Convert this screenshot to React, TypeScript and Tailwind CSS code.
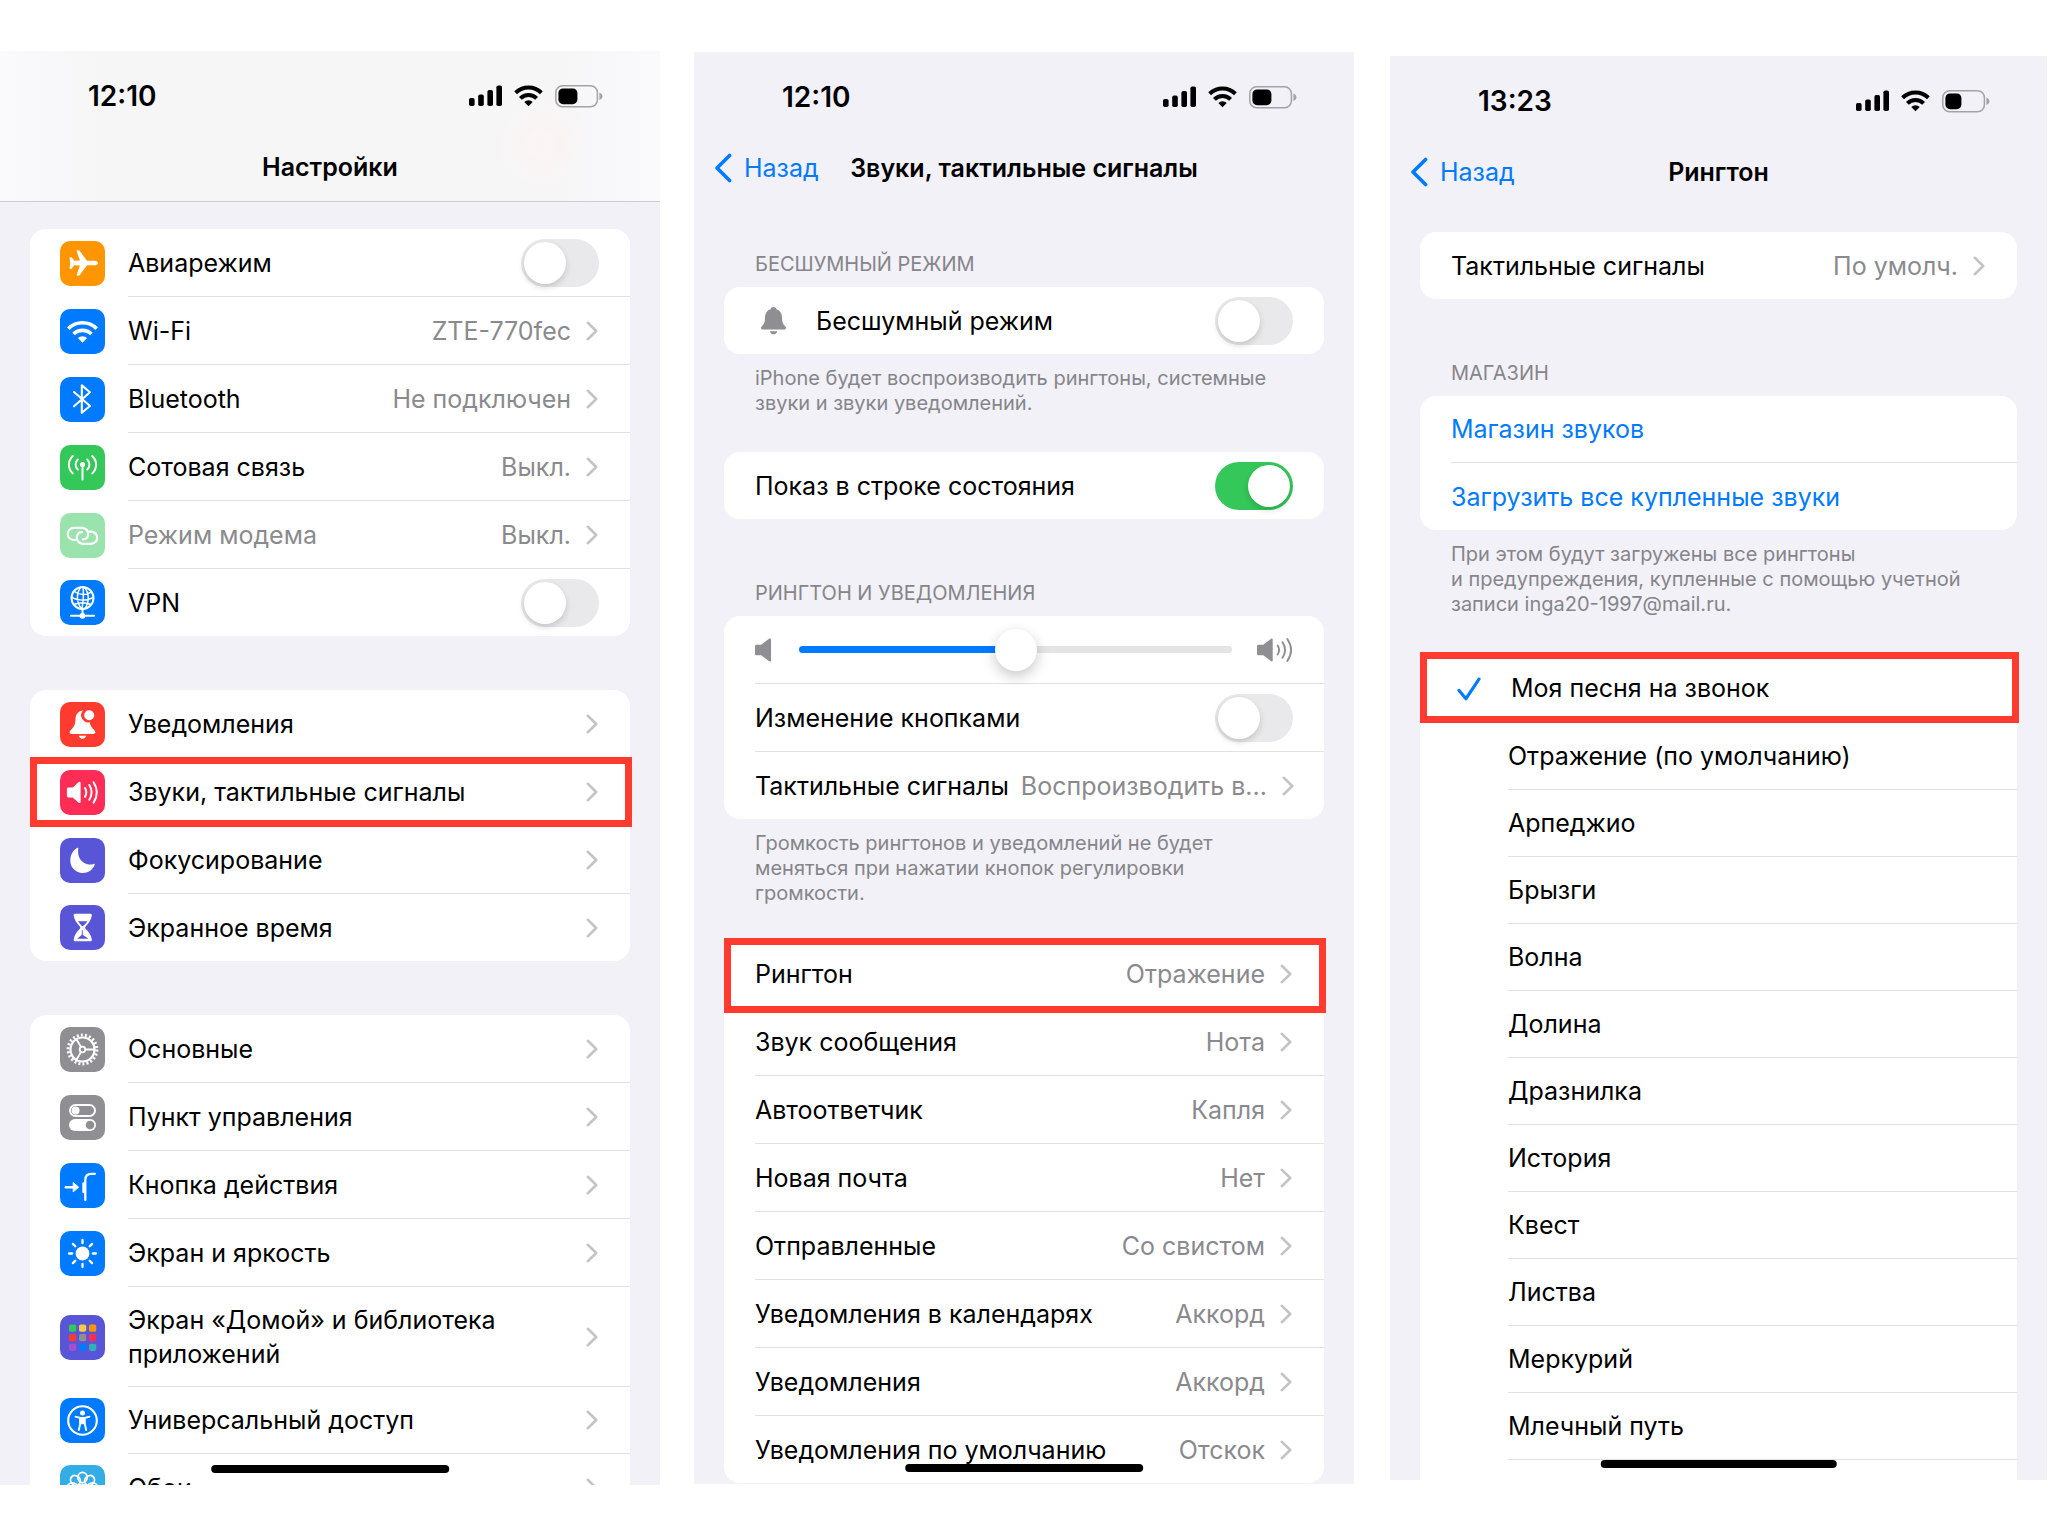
import type { ReactNode } from "react";
import clsx from "clsx";

/* ---------- status bar ---------- */

function StatusBar({ time, charge }: { time: string; charge: number }) {
  return (
    <div className="flex h-[90px] items-center justify-between pl-[88px] pr-[57px]">
      <span className="text-[28px] font-semibold leading-8">{time}</span>
      <div className="flex items-center gap-3">
        <svg width="33" height="22" viewBox="0 0 33 22" aria-hidden="true">
          <rect x="0" y="13" width="5.6" height="8" rx="1.8" />
          <rect x="9.2" y="9.5" width="5.6" height="11.5" rx="1.8" />
          <rect x="18.4" y="5" width="5.6" height="16" rx="1.8" />
          <rect x="27.4" y="0.5" width="5.6" height="20.5" rx="1.8" />
        </svg>
        <svg width="29" height="22" viewBox="0 0 29 22" fill="none" stroke="#000" strokeWidth="4" aria-hidden="true">
          <path d="M1.6 7.8a18.5 18.5 0 0 1 25.8 0" />
          <path d="M6.4 13.4a11.4 11.4 0 0 1 16.2 0" />
          <path d="M14.5 21.3l-4.2-4.3a6 6 0 0 1 8.4 0z" fill="#000" stroke="none" />
        </svg>
        <svg width="48" height="23" viewBox="0 0 48 23" aria-hidden="true">
          <rect x="0.8" y="0.8" width="41.6" height="21" rx="6.8" fill="none" stroke="#a3a3a7" strokeWidth="1.5" />
          <rect x="3.4" y="3.4" width={charge} height="15.8" rx="4.6" />
          <path d="M44.4 7.6c2 .8 3 2 3 3.7s-1 2.9-3 3.7z" fill="#a3a3a7" />
        </svg>
      </div>
    </div>
  );
}

function NavBar({ title, back }: { title: string; back?: boolean }) {
  return (
    <div className="grid h-[52px] grid-cols-[1fr_auto_1fr] items-center">
      <div>
        {back && (
          <a href="#back" className="ml-5 flex w-fit items-center gap-3 text-[25px] leading-8 text-[#007aff]">
            <svg width="18" height="30" viewBox="0 0 18 30" fill="none" stroke="currentColor" strokeWidth="3.6" strokeLinecap="round" strokeLinejoin="round" aria-hidden="true">
              <path d="M15.6 2.4L3 15l12.600 12.600" />
            </svg>
            Назад
          </a>
        )}
      </div>
      <h1 className="text-[25px] font-semibold leading-8">{title}</h1>
    </div>
  );
}

function HomeIndicator() {
  return <div className="absolute bottom-3 left-1/2 h-2 w-[36%] -translate-x-1/2 rounded-full bg-black" />;
}

/* ---------- list parts ---------- */

function Chevron() {
  return (
    <svg className="mr-px shrink-0" width="12" height="20" viewBox="0 0 12 20" fill="none" stroke="#c4c4c7" strokeWidth="2.6" strokeLinecap="round" strokeLinejoin="round" aria-hidden="true">
      <path d="M1.800 1.800L10.200 10l-8.400 8.200" />
    </svg>
  );
}

function Switch({ on }: { on?: boolean }) {
  return (
    <input
      type="checkbox"
      role="switch"
      defaultChecked={on}
      className="h-12 w-[78px] shrink-0 appearance-none rounded-full bg-[#e9e9eb] p-[3px] before:block before:size-[42px] before:rounded-full before:bg-white before:shadow-[0_3px_6px_rgba(0,0,0,0.16)] checked:bg-[#34c759] checked:before:ml-[30px]"
    />
  );
}

function Card({ children, className }: { children: ReactNode; className?: string }) {
  return <div className={clsx("mx-[30px] rounded-2xl bg-white", className)}>{children}</div>;
}

function Highlight({ className }: { className: string }) {
  return (
    <span
      className={clsx("pointer-events-none absolute left-0 -right-0.5 z-10 border-[7px] border-[#ff3b30]", className)}
    />
  );
}

type RowProps = {
  label: string;
  value?: string;
  icon?: ReactNode;
  toggle?: boolean;
  on?: boolean;
  dim?: boolean;
  highlight?: string;
  size?: "normal" | "compact" | "double";
};

function Row({ label, value, icon, toggle, on, dim, highlight, size = "normal" }: RowProps) {
  const rowClass = clsx(
    "group/row relative flex items-center",
    icon ? "pl-[30px]" : "pl-[31px]",
    size === "normal" && "h-[68px] last:h-[67px]",
    size === "compact" && "h-[67px]",
    size === "double" && "h-[100px]",
  );
  const body = (
    <>
      {icon}
      <span className="flex flex-1 items-center gap-3 self-stretch border-b border-[#e1e1e4] pr-[31px] group-last/row:border-b-0">
        <span className={clsx("flex-1 text-[25px] leading-[34px]", dim ? "text-[#8a8a8e]" : "text-black", value && "whitespace-nowrap")}>
          {label}
        </span>
        {toggle ? (
          <Switch on={on} />
        ) : (
          <span className="flex items-center gap-[15px]">
            {value && <span className="whitespace-nowrap text-[25px] leading-[34px] text-[#8a8a8e]">{value}</span>}
            <Chevron />
          </span>
        )}
      </span>
      {highlight && <Highlight className={highlight} />}
    </>
  );

  if (toggle) {
    return <label className={rowClass}>{body}</label>;
  }
  return (
    <a href="#row" className={rowClass}>
      {body}
    </a>
  );
}

function SectionTitle({ children, className }: { children: ReactNode; className?: string }) {
  return <h2 className={clsx("mx-[61px] mb-[11px] text-[20px] leading-6 text-[#85858a]", className)}>{children}</h2>;
}

function Note({ children }: { children: ReactNode }) {
  return <p className="mx-[61px] pt-3 text-[20px] leading-[25px] text-[#85858a]">{children}</p>;
}

/* ---------- settings icons, all on a 45px tile ---------- */

function Tile({ className, children }: { className: string; children: ReactNode }) {
  return (
    <svg
      className={clsx("mr-[23px] size-[45px] shrink-0 rounded-[10px]", className)}
      viewBox="0 0 45 45"
      fill="none"
      stroke="#fff"
      strokeWidth="2"
      strokeLinecap="round"
      strokeLinejoin="round"
      aria-hidden="true"
    >
      {children}
    </svg>
  );
}

const airplane = (
  <Tile className="bg-[#ff9500]">
    <path
      d="M38 22c0 1.400-1.900 2.300-4.200 2.300H27L19.800 34c-.4.500-.8.700-1.400.7h-1.100c-.5 0-.8-.4-.6-.9l3.200-9.400-5.600-.2-2.300 3c-.3.400-.6.500-1 .5h-.8c-.5 0-.8-.3-.7-.8l.8-4.900-.8-4.900c-.1-.5.2-.8.7-.8h.8c.4 0 .7.100 1 .5l2.300 3 5.600-.2-3.200-9.400c-.2-.5.100-.9.600-.9h1.100c.6 0 1 .2 1.400.7l7.200 9.700h6.800c2.300 0 4.200.9 4.200 2.300z"
      fill="#fff"
      stroke="none"
    />
  </Tile>
);

const wifi = (
  <Tile className="bg-[#007aff]">
    <g strokeWidth="3.700" strokeLinecap="butt">
      <path d="M8.300 19.600a20.100 20.100 0 0 1 28.400 0" />
      <path d="M13.600 25a12.600 12.600 0 0 1 17.800 0" />
    </g>
    <path d="M22.500 33.800l-4.600-4.700a6.500 6.500 0 0 1 9.200 0z" fill="#fff" stroke="none" />
  </Tile>
);

const bluetooth = (
  <Tile className="bg-[#007aff]">
    <path d="M14 15l16 14-8.200 6.800V8.400L30 15.200 14 29.200" strokeWidth="2.100" />
  </Tile>
);

const cellular = (
  <Tile className="bg-[#34c759]">
    <path d="M22.500 20v14.500" />
    <circle cx="22.500" cy="19.500" r="2.600" fill="#fff" stroke="none" />
    <path d="M17.800 14.500c-3 2.800-3 7.200 0 10M27.200 14.500c3 2.800 3 7.200 0 10M12.800 11c-5.200 5-5.200 12.500 0 17.400M32.200 11c5.200 5 5.200 12.500 0 17.400" />
  </Tile>
);

const hotspot = (
  <Tile className="bg-[#9ae3ac]">
    <path
      d="M15.500 27h-1.600a6.100 6.100 0 0 1 0-12.200h8.200a6.100 6.100 0 0 1 6 7.300c-.5 2.600-2.400 4.300-5.200 4.300M29.500 18.600h1.600a6.100 6.100 0 0 1 0 12.200h-8.200a6.100 6.100 0 0 1-6-7.300c.5-2.600 2.400-4.300 5.200-4.300"
      strokeWidth="2.200"
    />
  </Tile>
);

const vpn = (
  <Tile className="bg-[#007aff]">
    <g strokeWidth="1.500">
      <circle cx="22.500" cy="18" r="11" strokeWidth="1.900" />
      <path d="M20.500 7.500c-4.500 6-4 15.500 1 21M24.500 7.500c4.800 5.500 5 14.500.5 21M23 7.200c.8 7 .3 14.500-1 21.500M14.500 11.500c5 3.800 11.500 4 16.500.6M11.800 17.500c6.500 3.300 15 3.300 21.500 0M14 24.500c4.800-2.400 12-2.400 17 0" />
    </g>
    <path d="M22.500 29v5M11 35.800h23" strokeWidth="2.100" />
    <circle cx="22.500" cy="35.800" r="2.900" fill="#fff" stroke="none" />
  </Tile>
);

const notifications = (
  <Tile className="bg-[#ff3b30]">
    <path
      d="M23 8.400c-4.800.4-7.400 4-7.500 8.800-.2 5-1.200 7.300-4.200 10.200-1 1-1.700 1.900-1.700 2.900 0 1 .8 1.700 2 1.700h21.800c1.200 0 2-.7 2-1.700s-.7-1.900-1.700-2.900c-2.300-2.200-3.400-4-3.900-7.200a7.200 7.200 0 0 1-6.800-11.800z"
      fill="#fff"
      stroke="none"
    />
    <circle cx="29.200" cy="13.200" r="5" fill="#fff" stroke="none" />
    <path d="M18.800 33.800h7.400c-.4 2-1.900 3-3.700 3s-3.300-1-3.700-3z" fill="#fff" stroke="none" />
  </Tile>
);

const sounds = (
  <Tile className="bg-[#ff2d55]">
    <path d="M8.500 17.400h4.200l6-5.300c.8-.7 1.900-.3 1.900.8v19c0 1.100-1.100 1.500-1.900.8l-6-5.300H8.500c-1 0-1.600-.6-1.600-1.600V19c0-1 .6-1.600 1.600-1.600z" fill="#fff" stroke="none" />
    <path d="M25 18c1.700 2.800 1.700 6 0 8.800M29.300 15c3 4.700 3 10 0 14.800M33.600 12.200c4.200 6.600 4.200 13.800 0 20.400" />
  </Tile>
);

const focus = (
  <Tile className="bg-[#5856d6]">
    <path d="M18.300 10.300c-1 7.500 1.500 13.600 8.300 15.600 2.500.7 5 .7 7.200 0 .7-.2 1.100.3.800 1-2 5-6.400 8-11.800 8-7.200 0-12.500-5.300-12.500-12.400 0-5.600 2.800-10.300 7.100-12.700.6-.3 1 0 .9.500z" fill="#fff" stroke="none" />
  </Tile>
);

const screenTime = (
  <Tile className="bg-[#5856d6]">
    <path d="M15 8.800h15.500c1 0 1.500.8 1.300 1.800-.6 4.500-2.800 7.500-6 10.600-.8.800-.8 1.900 0 2.700 3.200 3.100 5.400 6 6 10.500.2 1-.3 1.800-1.300 1.800H15c-1 0-1.500-.8-1.300-1.800.6-4.500 2.800-7.400 6-10.500.8-.8.8-1.900 0-2.700-3.200-3.100-5.400-6.100-6-10.600-.2-1 .3-1.800 1.300-1.800z" fill="#fff" stroke="none" />
    <path d="M18 16.200h9.500c-1 1.600-2.500 3-4 4.500-.5.500-1.300.5-1.800 0-1.400-1.500-2.800-3-3.700-4.500zM22.700 25.200v4.200c0 1 3.800 2.300 5.600 4.300H17.200c1.800-2 4.600-3.300 4.600-4.300v-4.200z" fill="#5856d6" stroke="none" />
  </Tile>
);

const general = (
  <Tile className="bg-[#8e8e93]">
    <circle cx="22.500" cy="22.500" r="14.400" strokeWidth="3" strokeDasharray="2 2.110" strokeLinecap="butt" />
    <circle cx="22.500" cy="22.500" r="12" strokeWidth="2.200" />
    <circle cx="22.500" cy="22.500" r="2.800" strokeWidth="1.800" />
    <path d="M25.500 22.500h9M21 20l-4.700-8M21 25l-4.700 8" strokeWidth="1.900" />
  </Tile>
);

const controlCenter = (
  <Tile className="bg-[#8e8e93]">
    <rect x="10" y="10" width="25" height="11" rx="5.500" />
    <circle cx="15.600" cy="15.500" r="3.900" fill="#fff" stroke="none" />
    <rect x="9" y="24" width="27" height="12" rx="6" fill="#fff" stroke="none" />
    <circle cx="30" cy="30" r="4.300" fill="#8e8e93" stroke="none" />
  </Tile>
);

const actionButton = (
  <Tile className="bg-[#007aff]">
    <path d="M5.800 24.200h10" strokeWidth="2.400" />
    <path d="M13.500 19.800l5.200 4.400-5.200 4.400z" fill="#fff" strokeWidth="1" />
    <path d="M25.300 37V17c0-4 2-6.200 6-6.200h3.600" strokeWidth="2.300" />
    <path d="M23.500 20.500v8.500" strokeWidth="2.400" />
  </Tile>
);

const brightness = (
  <Tile className="bg-[#007aff]">
    <circle cx="22.500" cy="22.500" r="6.900" fill="#fff" stroke="none" />
    <path d="M22.500 9v3.200M22.500 32.800V36M9 22.500h3.200M32.800 22.500H36M12.900 12.900l2.400 2.400M29.700 29.700l2.400 2.400M12.900 32.100l2.400-2.400M29.700 15.300l2.400-2.400" strokeWidth="2.300" />
  </Tile>
);

const homeTiles = ["#34c759", "#f7c948", "#ff9500", "#ff3b30", "#8e8e93", "#ff2d55", "#a050d0", "#007aff", "#30b0b8"];

const homeScreen = (
  <Tile className="bg-[#5856d6]">
    {homeTiles.map((color, i) => (
      <rect key={color} x={9 + (i % 3) * 10} y={9.500 + Math.floor(i / 3) * 9.600} width="7.200" height="7.200" rx="1.800" fill={color} stroke="none" />
    ))}
  </Tile>
);

const accessibility = (
  <Tile className="bg-[#007aff]">
    <circle cx="22.500" cy="22.500" r="14.300" strokeWidth="2.100" />
    <circle cx="22.500" cy="15" r="2.500" fill="#fff" stroke="none" />
    <path d="M15.500 18.700l4.800 1.300v5.500L18.800 32M29.500 18.700L24.700 20v5.500L26.200 32" strokeWidth="1.900" />
    <path d="M20.200 19.500h4.600v6.200h-4.600z" fill="#fff" strokeWidth="1" />
  </Tile>
);

const wallpaper = (
  <Tile className="bg-[#32ade6]">
    {[0, 45, 90, 135, 180, 225, 270, 315].map((angle) => (
      <ellipse key={angle} cx="22.500" cy="12.500" rx="4.600" ry="5.200" strokeWidth="1.800" transform={`rotate(${angle} 22.500 22.500)`} />
    ))}
    <circle cx="22.500" cy="22.500" r="3" strokeWidth="1.800" />
  </Tile>
);

/* ---------- sound icons ---------- */

function BellIcon() {
  return (
    <svg className="ml-[7px] mr-[30px] shrink-0" width="25" height="28" viewBox="0 0 25 28" fill="#8e8e93" aria-hidden="true">
      <path d="M12.500 0c1.500 0 2.600.9 2.900 2.300 3.600 1 5.500 4 5.600 8 .1 5.100 1 6.900 3.200 9 .6.600.8 1.100.8 1.700 0 .9-.7 1.500-1.700 1.500H1.700C.7 22.500 0 21.900 0 21c0-.6.2-1.100.8-1.700 2.200-2.100 3.100-3.900 3.200-9 .1-4 2-7 5.600-8C9.900.9 11 0 12.500 0zM8.800 24.200h7.400c-.3 2-1.800 3.100-3.700 3.100s-3.400-1.100-3.700-3.100z" />
    </svg>
  );
}

function VolumeRow() {
  return (
    <div className="relative flex h-[68px] items-center pl-[31px]">
      <div className="flex flex-1 items-center self-stretch border-b border-[#e1e1e4] pr-[31px]">
        <svg className="mr-7 shrink-0" width="16" height="24" viewBox="0 0 16 24" fill="#8e8e93" aria-hidden="true">
          <path d="M1.600 6.700h4.600L13.800.9c1-.8 2.200-.4 2.200.9v20.400c0 1.300-1.200 1.700-2.200.9l-7.600-5.800H1.600C.6 17.300 0 16.700 0 15.700V8.300c0-1 .6-1.600 1.600-1.600z" />
        </svg>
        <input
          type="range"
          aria-label="Громкость"
          defaultValue={50}
          className="h-[7px] min-w-0 flex-1 appearance-none rounded-full bg-linear-to-r from-[#007aff] from-50% to-[#e4e4e6] to-50% [&::-webkit-slider-thumb]:size-[42px] [&::-webkit-slider-thumb]:appearance-none [&::-webkit-slider-thumb]:rounded-full [&::-webkit-slider-thumb]:bg-white [&::-webkit-slider-thumb]:shadow-[0_5px_14px_rgba(0,0,0,0.22)]"
        />
        <svg className="ml-[25px] shrink-0" width="36" height="26" viewBox="0 0 36 26" aria-hidden="true">
          <path d="M1.600 7.700h4.600l7.600-5.800c1-.8 1.900-.4 1.900.9v20.400c0 1.300-.9 1.700-1.900.9l-7.600-5.800H1.600c-1 0-1.600-.6-1.600-1.600V9.300c0-1 .6-1.600 1.600-1.600z" fill="#8e8e93" />
          <path d="M20.700 8.600c1.800 2.800 1.800 6 0 8.800M25.500 5.300c3.300 4.900 3.300 10.500 0 15.400M30.300 2c4.900 7.100 4.900 14.900 0 22" fill="none" stroke="#8e8e93" strokeWidth="1.900" strokeLinecap="round" />
        </svg>
      </div>
    </div>
  );
}

const toneRows = [
  { label: "Звук сообщения", value: "Нота" },
  { label: "Автоответчик", value: "Капля" },
  { label: "Новая почта", value: "Нет" },
  { label: "Отправленные", value: "Со свистом" },
  { label: "Уведомления в календарях", value: "Аккорд" },
  { label: "Уведомления", value: "Аккорд" },
  { label: "Уведомления по умолчанию", value: "Отскок" },
];

const ringtones = [
  "Моя песня на звонок",
  "Отражение (по умолчанию)",
  "Арпеджио",
  "Брызги",
  "Волна",
  "Долина",
  "Дразнилка",
  "История",
  "Квест",
  "Листва",
  "Меркурий",
  "Млечный путь",
];

function RingtoneOption({ name, checked }: { name: string; checked: boolean }) {
  return (
    <label className="relative flex h-[67px] items-center pl-[31px] first:h-[69px]">
      <input type="radio" name="ringtone" defaultChecked={checked} className="sr-only" />
      {checked ? (
        <svg className="mr-[30px] ml-[6px] shrink-0" width="24" height="24" viewBox="0 0 24 24" fill="none" stroke="#007aff" strokeWidth="3.200" strokeLinecap="round" strokeLinejoin="round" aria-hidden="true">
          <path d="M2 13.500l7 8.200L22 2.200" />
        </svg>
      ) : (
        <span className="w-[57px] shrink-0" />
      )}
      <span className="flex flex-1 items-center self-stretch border-b border-[#e1e1e4] text-[25px] leading-[34px]">{name}</span>
      {checked && <Highlight className="-top-0.5 bottom-0" />}
    </label>
  );
}

/* ---------- screens ---------- */

function SettingsScreen() {
  return (
    <section className="relative my-[51px] mr-[34px] flex-[660] overflow-hidden bg-[#f2f1f7]">
      <header className="border-b border-[#cdcdd0] bg-[#f8f8f9] bg-[radial-gradient(circle_at_82%_62%,#fcf4f3_0,#fcf4f300_50px),linear-gradient(to_right,#fafafc,#f6f6f7_15%,#f6f6f7_85%,#fafafc)] pb-2">
        <StatusBar time="12:10" charge={19} />
        <NavBar title="Настройки" />
      </header>
      <Card className="mt-[27px]">
        <Row icon={airplane} label="Авиарежим" toggle />
        <Row icon={wifi} label="Wi-Fi" value="ZTE-770fec" />
        <Row icon={bluetooth} label="Bluetooth" value="Не подключен" />
        <Row icon={cellular} label="Сотовая связь" value="Выкл." />
        <Row icon={hotspot} label="Режим модема" value="Выкл." dim />
        <Row icon={vpn} label="VPN" toggle />
      </Card>
      <Card className="mt-[54px]">
        <Row icon={notifications} label="Уведомления" />
        <Row icon={sounds} label="Звуки, тактильные сигналы" highlight="-top-px -bottom-px" />
        <Row icon={focus} label="Фокусирование" />
        <Row icon={screenTime} label="Экранное время" />
      </Card>
      <Card className="mt-[54px]">
        <Row icon={general} label="Основные" />
        <Row icon={controlCenter} label="Пункт управления" />
        <Row icon={actionButton} label="Кнопка действия" />
        <Row icon={brightness} label="Экран и яркость" />
        <Row icon={homeScreen} label="Экран «Домой» и библиотека приложений" size="double" />
        <Row icon={accessibility} label="Универсальный доступ" size="compact" />
        <Row icon={wallpaper} label="Обои" />
      </Card>
      <HomeIndicator />
    </section>
  );
}

function SoundsScreen() {
  return (
    <section className="relative my-[52px] mr-9 flex-[660] overflow-hidden bg-[#f2f1f7]">
      <StatusBar time="12:10" charge={19} />
      <NavBar title="Звуки, тактильные сигналы" back />
      <SectionTitle className="mt-[58px]">БЕСШУМНЫЙ РЕЖИМ</SectionTitle>
      <Card>
        <Row icon={<BellIcon />} label="Бесшумный режим" toggle />
      </Card>
      <Note>iPhone будет воспроизводить рингтоны, системные звуки и звуки уведомлений.</Note>
      <Card className="mt-9">
        <Row label="Показ в строке состояния" toggle on />
      </Card>
      <SectionTitle className="mt-[62px]">РИНГТОН И УВЕДОМЛЕНИЯ</SectionTitle>
      <Card>
        <VolumeRow />
        <Row label="Изменение кнопками" toggle />
        <Row label="Тактильные сигналы" value="Воспроизводить в..." />
      </Card>
      <Note>Громкость рингтонов и уведомлений не будет меняться при нажатии кнопок регулировки громкости.</Note>
      <Card className="mt-[34px]">
        <Row label="Рингтон" value="Отражение" highlight="-top-0.5 -bottom-[5px]" />
        {toneRows.map((row) => (
          <Row key={row.label} {...row} />
        ))}
      </Card>
      <HomeIndicator />
    </section>
  );
}

function RingtoneScreen() {
  return (
    <section className="relative my-14 flex-[657] overflow-hidden bg-[#f2f1f7]">
      <StatusBar time="13:23" charge={16} />
      <NavBar title="Рингтон" back />
      <Card className="mt-[34px]">
        <Row label="Тактильные сигналы" value="По умолч." size="compact" />
      </Card>
      <SectionTitle className="mt-[62px]">МАГАЗИН</SectionTitle>
      <Card className="text-[25px] leading-[34px] text-[#007aff]">
        <a href="#store" className="ml-[31px] flex h-[67px] items-center border-b border-[#e1e1e4]">
          Магазин звуков
        </a>
        <a href="#download" className="ml-[31px] flex h-[67px] items-center">
          Загрузить все купленные звуки
        </a>
      </Card>
      <Note>
        При этом будут загружены все рингтоны
        <br />и предупреждения, купленные с помощью учетной записи inga20-1997@mail.ru.
      </Note>
      <Card className="mt-[37px] h-full">
        {ringtones.map((name, i) => (
          <RingtoneOption key={name} name={name} checked={i === 0} />
        ))}
      </Card>
      <HomeIndicator />
    </section>
  );
}

export default function App() {
  return (
    <main className="flex h-screen bg-white pr-px font-[Inter,'Liberation_Sans',sans-serif] text-black">
      <SettingsScreen />
      <SoundsScreen />
      <RingtoneScreen />
    </main>
  );
}
